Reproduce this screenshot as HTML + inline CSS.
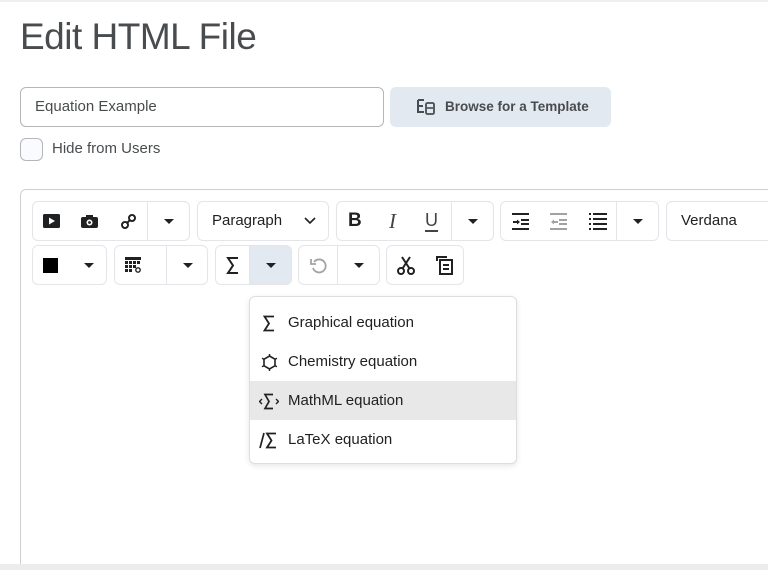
<!DOCTYPE html>
<html><head><style>
*{box-sizing:border-box;margin:0;padding:0}
body{width:768px;height:570px;background:#fff;font-family:"Liberation Sans",sans-serif;color:#202122;position:relative;overflow:hidden}
.a{position:absolute}
.g{position:absolute;border:1px solid #e3e5e8;border-radius:6px;background:#fff}
.dv{position:absolute;top:0;bottom:0;width:1px;background:#e3e5e8}
.ic{position:absolute;display:flex;align-items:center;justify-content:center}
.tri{width:0;height:0;border-left:5px solid transparent;border-right:5px solid transparent;border-top:5px solid #202122}
.mi{position:absolute;left:0;right:0;height:39px;display:flex;align-items:center;font-size:15px;color:#202122}
.mi .s{width:38px;text-align:center;font-size:17px}
</style></head><body>
<div class="a" style="left:0;top:0;width:768px;height:2px;background:#f0f0f0"></div>
<div class="a" style="left:20px;top:16px;font-size:37px;color:#494c4e;letter-spacing:-0.5px">Edit HTML File</div>
<div class="a" style="left:20px;top:87px;width:364px;height:40px;border:1px solid #b4b6b8;border-radius:6px;padding:0 14px;line-height:38px;font-size:15px;color:#494c4e">Equation Example</div>
<div class="a" style="left:390px;top:87px;width:221px;height:40px;background:#e3e9f1;border-radius:6px;font-size:13.5px;font-weight:bold;color:#494c4e;line-height:40px;padding-left:55px">Browse for a Template</div>
<svg class="a" style="left:416px;top:98px" width="20" height="18" viewBox="0 0 20 18"><path d="M2 2h6M2 2v12h6M2 8h5" stroke="#494c4e" stroke-width="2" fill="none"/><rect x="10" y="5" width="8" height="11" rx="1.5" stroke="#494c4e" stroke-width="1.8" fill="none"/><path d="M11 10h6" stroke="#494c4e" stroke-width="1.6"/></svg>
<div class="a" style="left:20px;top:138px;width:23px;height:23px;border:1px solid #b4b6b8;border-radius:6px;background:#f9fbff"></div>
<div class="a" style="left:52px;top:140px;font-size:15px;color:#494c4e">Hide from Users</div>
<div class="a" style="left:20px;top:189px;width:760px;height:376px;border:1px solid #cdd0d3;border-bottom:none;border-radius:6px 6px 0 0"></div>
<div class="a" style="left:0;top:564px;width:768px;height:6px;background:#ececec"></div>

<!-- row1 -->
<div class="g" style="left:32px;top:201px;width:158px;height:40px">
 <svg class="a" style="left:10px;top:12px" width="18" height="15"><rect x="0" y="0" width="17" height="14" rx="1.5" fill="#202122"/><path d="M6 3.5l6 3.5-6 3.5z" fill="#fff"/></svg>
 <svg class="a" style="left:48px;top:13px" width="18" height="14"><rect x="0" y="2" width="17" height="11" rx="2" fill="#202122"/><circle cx="8.5" cy="7.5" r="3" fill="#fff"/><circle cx="8.5" cy="7.5" r="1.4" fill="#202122"/><rect x="5" y="0" width="7" height="3" fill="#202122"/></svg>
 <svg class="a" style="left:87px;top:11px" width="18" height="18"><g fill="none" stroke="#202122" stroke-width="2"><rect x="2" y="9" width="6" height="6" rx="3" transform="rotate(-45 5 12)"/><rect x="9" y="2" width="6" height="6" rx="3" transform="rotate(-45 12 5)"/><path d="M7 10l3-3"/></g></svg>
 <div class="dv" style="left:114px"></div>
 <div class="ic" style="left:115px;top:0;width:42px;height:38px"><div class="tri"></div></div>
</div>
<div class="g" style="left:197px;top:201px;width:132px;height:40px;font-size:15px;line-height:38px;padding-left:14px">Paragraph
 <svg class="a" style="left:106px;top:15px" width="12" height="8"><path d="M1 1l5 5 5-5" fill="none" stroke="#202122" stroke-width="1.6"/></svg></div>
<div class="g" style="left:336px;top:201px;width:158px;height:40px">
 <div class="a" style="left:11px;top:8px;font-size:19px;font-weight:bold">B</div>
 <div class="a" style="left:52px;top:7px;font-size:21px;font-style:italic;font-family:'Liberation Serif',serif;color:#444">I</div>
 <div class="a" style="left:88px;top:8px;font-size:18px;color:#444;border-bottom:2px solid #444;line-height:20px">U</div>
 <div class="dv" style="left:114px"></div>
 <div class="ic" style="left:115px;top:0;width:42px;height:38px"><div class="tri"></div></div>
</div>
<div class="g" style="left:500px;top:201px;width:159px;height:40px">
 <svg class="a" style="left:11px;top:11px" width="18" height="17"><g stroke="#202122" stroke-width="2"><path d="M0 1h17M0 16h17M9 7h8M9 11h8M1 9h5"/></g><path d="M5 6.5l3 2.5-3 2.5z" fill="#202122"/></svg>
 <svg class="a" style="left:49px;top:11px" width="18" height="17"><g stroke="#a0a3a6" stroke-width="2"><path d="M0 1h17M0 16h17M9 7h8M9 11h8M3 9h5"/></g><path d="M4 6.5l-3 2.5 3 2.5z" fill="#a0a3a6"/></svg>
 <svg class="a" style="left:88px;top:11px" width="18" height="17"><g stroke="#202122" stroke-width="2"><path d="M4 1h14M4 6h14M4 11h14M4 16h14M0 1h2M0 6h2M0 11h2M0 16h2"/></g></svg>
 <div class="dv" style="left:115px"></div>
 <div class="ic" style="left:116px;top:0;width:42px;height:38px"><div class="tri"></div></div>
</div>
<div class="g" style="left:666px;top:201px;width:120px;height:40px;font-size:15px;line-height:38px;padding-left:14px">Verdana</div>

<!-- row2 -->
<div class="g" style="left:32px;top:245px;width:75px;height:40px">
 <div class="a" style="left:10px;top:12px;width:15px;height:15px;background:#000"></div>
 <div class="ic" style="left:38px;top:0;width:36px;height:38px"><div class="tri"></div></div>
</div>
<div class="g" style="left:114px;top:245px;width:94px;height:40px">
 <svg class="a" style="left:10px;top:11px" width="18" height="18"><g fill="#202122"><rect x="0" y="0" width="16" height="3"/><rect x="0" y="4" width="3" height="3"/><rect x="4" y="4" width="3" height="3"/><rect x="8" y="4" width="3" height="3"/><rect x="12" y="4" width="3" height="3"/><rect x="0" y="8" width="3" height="3"/><rect x="4" y="8" width="3" height="3"/><rect x="8" y="8" width="3" height="3"/><rect x="0" y="12" width="3" height="3"/><rect x="4" y="12" width="3" height="3"/></g><circle cx="13" cy="13" r="2.2" fill="none" stroke="#202122" stroke-width="1.4"/></svg>
 <div class="dv" style="left:51px"></div>
 <div class="ic" style="left:52px;top:0;width:41px;height:38px"><div class="tri"></div></div>
</div>
<div class="g" style="left:215px;top:245px;width:77px;height:40px;overflow:hidden">
 <svg class="a" style="left:10px;top:10px" width="14" height="19"><path d="M12 2H2l5 7.5L2 17h10" fill="none" stroke="#202122" stroke-width="2"/></svg>
 <div class="a" style="left:33px;top:0;width:43px;height:38px;background:#e3e9f1"></div>
 <div class="dv" style="left:33px"></div>
 <div class="ic" style="left:34px;top:0;width:42px;height:38px"><div class="tri"></div></div>
</div>
<div class="g" style="left:298px;top:245px;width:82px;height:40px">
 <svg class="a" style="left:11px;top:11px" width="18" height="18"><path d="M4 5A6.5 6.5 0 1 1 3 11" fill="none" stroke="#a0a3a6" stroke-width="1.8"/><path d="M1 2v5h5" fill="none" stroke="#a0a3a6" stroke-width="1.8"/></svg>
 <div class="dv" style="left:38px"></div>
 <div class="ic" style="left:39px;top:0;width:42px;height:38px"><div class="tri"></div></div>
</div>
<div class="g" style="left:386px;top:245px;width:78px;height:40px">
 <svg class="a" style="left:10px;top:10px" width="18" height="20"><g fill="none" stroke="#202122" stroke-width="2"><circle cx="4" cy="15" r="3"/><circle cx="14" cy="15" r="3"/><path d="M5.5 12.5L13 1M12.5 12.5L5 1"/></g></svg>
 <svg class="a" style="left:49px;top:10px" width="18" height="20"><g fill="none" stroke="#202122" stroke-width="2"><path d="M1 5V1h10"/><rect x="4" y="4" width="12" height="14"/><path d="M7 9h6M7 13h6"/></g></svg>
</div>

<!-- menu -->
<div class="a" style="left:249px;top:296px;width:268px;height:168px;border:1px solid #dcdee1;border-radius:6px;background:#fff;box-shadow:0 2px 6px rgba(0,0,0,0.1);overflow:hidden">
 <div class="mi" style="top:6px"><span class="s"><svg width="12" height="17" style="vertical-align:middle"><path d="M11 1.5H1.5l4.5 7-4.5 7H11" fill="none" stroke="#202122" stroke-width="1.8"/></svg></span>Graphical equation</div>
 <div class="mi" style="top:45px"><span class="s"><svg width="17" height="17" style="vertical-align:middle"><path d="M8.5 2l5.5 3.2v6.6L8.5 15 3 11.8V5.2z" fill="none" stroke="#202122" stroke-width="1.6"/><path d="M8.5 0v2M14 5.2l2-1M14 11.8l2 1M8.5 15v2M3 11.8l-2 1M3 5.2l-2-1" stroke="#202122" stroke-width="1.4"/></svg></span>Chemistry equation</div>
 <div class="mi" style="top:84px;background:#e8e8e8"><span class="s"><svg width="20" height="17" style="vertical-align:middle"><path d="M3 6l-2.5 2.5L3 11M17 6l2.5 2.5L17 11" fill="none" stroke="#202122" stroke-width="1.4"/><path d="M14 1.5H6l4 7-4 7h8" fill="none" stroke="#202122" stroke-width="1.7"/></svg></span>MathML equation</div>
 <div class="mi" style="top:123px"><span class="s"><svg width="20" height="17" style="vertical-align:middle"><path d="M5 1L1 16" stroke="#202122" stroke-width="1.7"/><path d="M17 1.5H8l4.5 7-4.5 7h9" fill="none" stroke="#202122" stroke-width="1.8"/></svg></span>LaTeX equation</div>
</div>
</body></html>
